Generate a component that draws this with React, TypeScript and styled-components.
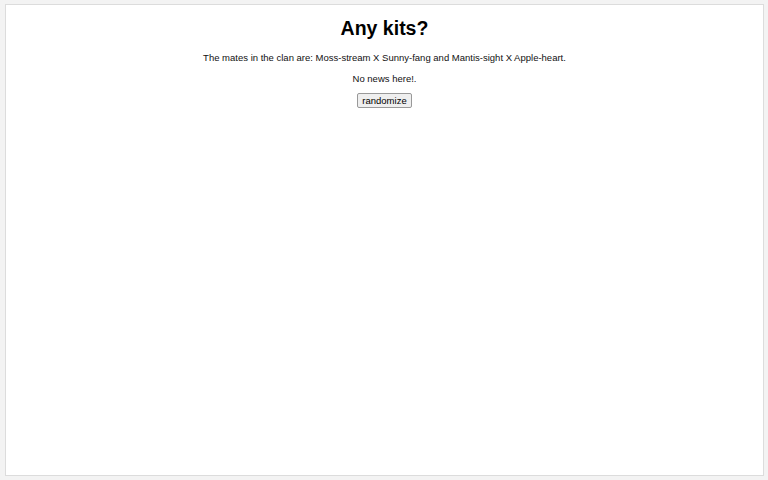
import React from 'react';
import styled, { createGlobalStyle } from 'styled-components';

const GlobalStyle = createGlobalStyle`
  html, body {
    margin: 0;
    padding: 0;
    background: #f3f3f3;
    font-family: 'Liberation Sans', Arial, sans-serif;
  }
`;

const Page = styled.div`
  padding: 4px 4px 4px 5px;
  height: 480px;
  box-sizing: border-box;
`;

const Panel = styled.div`
  height: 100%;
  box-sizing: border-box;
  background: #fff;
  border: 1px solid #dcdcdc;
  display: flex;
  flex-direction: column;
  align-items: center;
  padding-top: 12px;
`;

const Title = styled.h1`
  margin: 0 0 12px;
  font-size: 19.5px;
  font-weight: bold;
  color: #000;
`;

const Line = styled.p<{ $gap?: number }>`
  margin: 0 0 ${(p) => p.$gap ?? 10}px;
  font-size: 9.5px;
  color: #111;
`;

const Button = styled.button`
  font-family: 'Liberation Sans', Arial, sans-serif;
  font-size: 9.5px;
  padding: 1px 4px;
  background: #efefef;
  border: 1px solid #999;
  border-radius: 2px;
  color: #000;
`;

export default function App() {
  return (
    <>
      <GlobalStyle />
      <Page>
        <Panel>
          <Title>Any kits?</Title>
          <Line>The mates in the clan are: Moss-stream X Sunny-fang and Mantis-sight X Apple-heart.</Line>
          <Line $gap={9}>No news here!.</Line>
          <Button>randomize</Button>
        </Panel>
      </Page>
    </>
  );
}
